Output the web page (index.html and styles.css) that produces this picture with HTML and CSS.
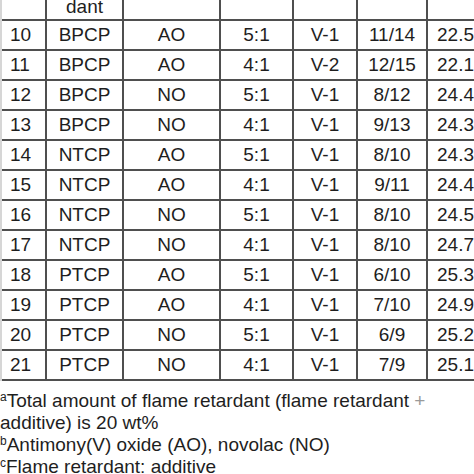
FILE: index.html
```html
<!DOCTYPE html>
<html>
<head>
<meta charset="utf-8">
<link rel="stylesheet" href="styles.css">
</head>
<body>
<div class="page">
  <div class="table-wrap">
    <table class="data">
      <colgroup>
        <col class="c1"><col class="c2"><col class="c3"><col class="c4"><col class="c5"><col class="c6"><col class="c7">
      </colgroup>
      <thead>
        <tr class="head"><th></th><th>dant</th><th></th><th></th><th></th><th></th><th></th></tr>
      </thead>
      <tbody>
        <tr><td>10</td><td>BPCP</td><td>AO</td><td>5:1</td><td>V-1</td><td>11/14</td><td>22.5</td></tr>
        <tr><td>11</td><td>BPCP</td><td>AO</td><td>4:1</td><td>V-2</td><td>12/15</td><td>22.1</td></tr>
        <tr><td>12</td><td>BPCP</td><td>NO</td><td>5:1</td><td>V-1</td><td>8/12</td><td>24.4</td></tr>
        <tr><td>13</td><td>BPCP</td><td>NO</td><td>4:1</td><td>V-1</td><td>9/13</td><td>24.3</td></tr>
        <tr><td>14</td><td>NTCP</td><td>AO</td><td>5:1</td><td>V-1</td><td>8/10</td><td>24.3</td></tr>
        <tr><td>15</td><td>NTCP</td><td>AO</td><td>4:1</td><td>V-1</td><td>9/11</td><td>24.4</td></tr>
        <tr><td>16</td><td>NTCP</td><td>NO</td><td>5:1</td><td>V-1</td><td>8/10</td><td>24.5</td></tr>
        <tr><td>17</td><td>NTCP</td><td>NO</td><td>4:1</td><td>V-1</td><td>8/10</td><td>24.7</td></tr>
        <tr><td>18</td><td>PTCP</td><td>AO</td><td>5:1</td><td>V-1</td><td>6/10</td><td>25.3</td></tr>
        <tr><td>19</td><td>PTCP</td><td>AO</td><td>4:1</td><td>V-1</td><td>7/10</td><td>24.9</td></tr>
        <tr><td>20</td><td>PTCP</td><td>NO</td><td>5:1</td><td>V-1</td><td>6/9</td><td>25.2</td></tr>
        <tr class="last"><td>21</td><td>PTCP</td><td>NO</td><td>4:1</td><td>V-1</td><td>7/9</td><td>25.1</td></tr>
      </tbody>
    </table>
  </div>
  <div class="notes">
    <p><sup>a</sup>Total amount of flame retardant (flame retardant <span class="plus">+</span><br>additive) is 20 wt%</p>
    <p><sup>b</sup>Antimony(V) oxide (AO), novolac (NO)</p>
    <p><sup>c</sup>Flame retardant: additive</p>
  </div>
</div>
</body>
</html>
```
FILE: styles.css
```css
html, body {
  margin: 0;
  padding: 0;
  background: #fff;
}
body {
  width: 474px;
  height: 474px;
  overflow: hidden;
  font-family: "Liberation Sans", Arial, sans-serif;
  color: #1e1e1e;
}
.page {
  width: 474px;
}
.table-wrap {
  border-left: 2px solid #d6d6d6;
  width: 530px;
}
.data {
  border-collapse: collapse;
  table-layout: fixed;
  width: 525px;
  font-size: 19px;
}
.c1 { width: 44px; }
.c2 { width: 77px; }
.c3 { width: 97px; }
.c4 { width: 73px; }
.c5 { width: 64px; }
.c6 { width: 70px; }
.c7 { width: 100px; }
.data th,
.data td {
  border: 2px solid #4f4f4f;
  padding: 0;
  text-align: center;
  font-weight: normal;
  white-space: nowrap;
}
.data th:first-child,
.data td:first-child {
  border-left: none;
  text-align: left;
  padding-left: 8px;
}
.data td:last-child {
  text-align: left;
  padding-left: 9px;
}
.head th {
  border-top: none;
  height: 20px;
  line-height: 13px;
  vertical-align: bottom;
  padding-bottom: 6px;
  box-sizing: border-box;
}
.data tbody tr {
  height: 30px;
}
.data td {
  line-height: 20px;
}
.notes {
  margin-top: 9px;
  font-size: 19px;
  line-height: 22px;
}
.notes p {
  margin: 0;
}
.notes sup {
  font-size: 12px;
  line-height: 0;
  vertical-align: 6px;
}
.plus {
  color: #9a9a9a;
  font-weight: 300;
}
```
